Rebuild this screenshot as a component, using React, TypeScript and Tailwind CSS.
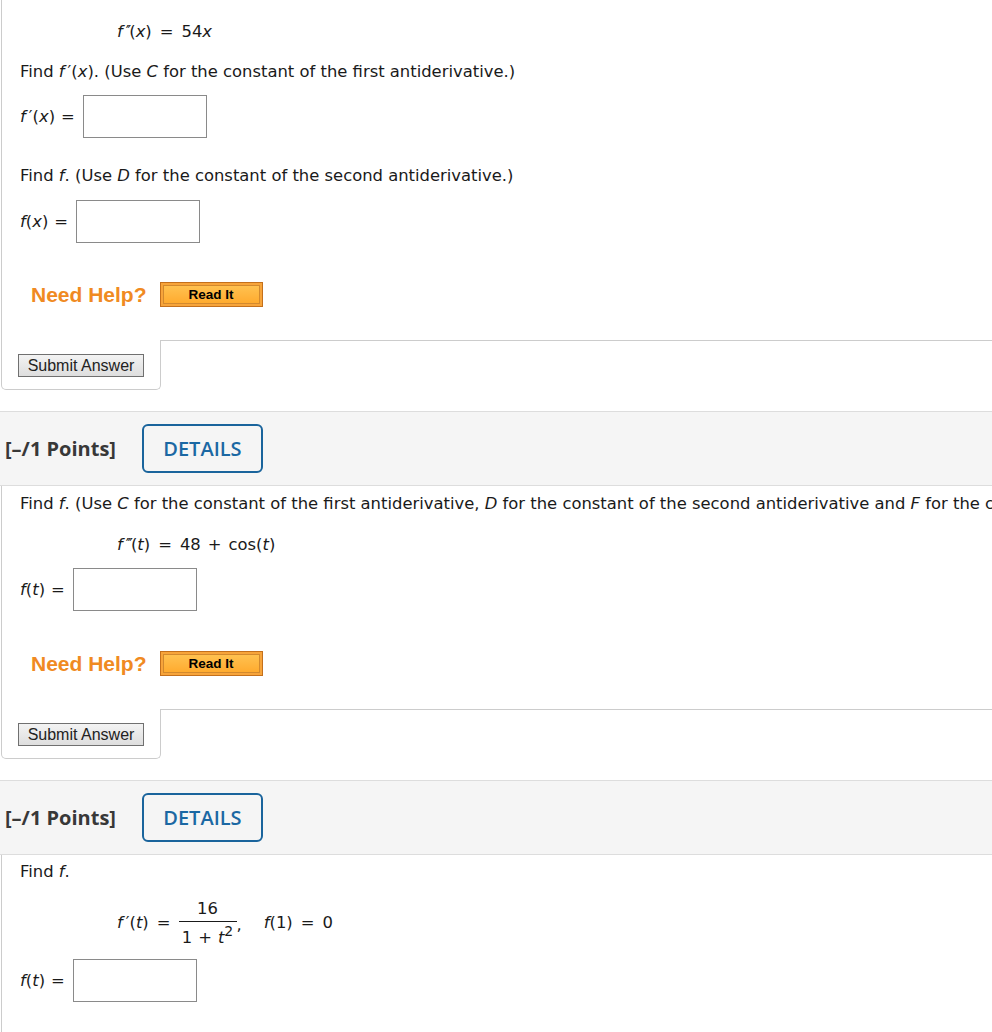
import React from "react";

const body = { fontFamily: '"DejaVu Sans", Verdana, sans-serif' };
const arial = { fontFamily: '"Liberation Sans", Arial, sans-serif' };
const open = { fontFamily: '"Open Sans", "Noto Sans", sans-serif' };

function Box() {
  return <span className="inline-block w-[124px] h-[43px] border border-[#8a8a8a] bg-white" />;
}

function AnswerRow({ label }: { label: React.ReactNode }) {
  return (
    <div className="flex items-center h-[43px] gap-[8px]">
      <span className="leading-[20px]">{label}</span>
      <Box />
    </div>
  );
}

function NeedHelp({ mt }: { mt: string }) {
  return (
    <div className={`flex items-center h-[25px] pl-[11px] ${mt}`} style={arial}>
      <span className="text-[21px] font-bold text-[#f08a22] leading-[25px]">Need Help?</span>
      <span className="ml-[13px] w-[103px] h-[25px] border border-[#c4701c] bg-[#f7a43a] p-[2px] flex">
        <span className="flex-1 border border-[#d2892e] bg-gradient-to-b from-[#ffc14f] to-[#ffab2e] flex items-center justify-center text-[13.5px] font-bold text-black leading-none">
          Read It
        </span>
      </span>
    </div>
  );
}

function SubmitRow() {
  return (
    <div className="flex h-[50px]">
      <div className="w-[160px] ml-px border-l border-b border-r border-[#cccccc] rounded-b-[5px] pl-[16px] pt-[14px]">
        <button
          className="h-[23px] w-[126px] border border-[#707070] bg-gradient-to-b from-[#f3f3f3] to-[#dedede] text-[16px] text-[#222] leading-none flex items-center justify-center"
          style={arial}
        >
          Submit Answer
        </button>
      </div>
      <div className="flex-1 border-t border-[#cccccc]" />
    </div>
  );
}

function Header() {
  return (
    <div className="mt-[21px] h-[75px] bg-[#f5f5f5] border-y border-[#dddddd] flex items-center pl-[5px]" style={open}>
      <span className="text-[20px] font-bold text-[#383838]">[–/1 Points]</span>
      <span className="ml-[26px] w-[121px] h-[49px] border-2 border-[#1a649c] rounded-[6px] flex items-center justify-center text-[20px] font-semibold text-[#1b68a3]">
        DETAILS
      </span>
    </div>
  );
}

const I = ({ children }: { children: React.ReactNode }) => <i>{children}</i>;
const P1 = () => <span className="ml-[3px]">′</span>;
const P2 = () => <span className="ml-[3px] tracking-[-2px]">′′</span>;
const P3 = () => <span className="ml-[3px] tracking-[-2px]">′′′</span>;

export default function App() {
  return (
    <div className="w-[992px] h-[1032px] overflow-hidden bg-white text-[16.4px] text-[#1a1a1a]" style={body}>
      {/* Question 1 (continued) */}
      <div className="ml-px border-l border-[#cccccc] pl-[18px] pt-[22px] pb-[33px]">
        <div className="leading-[20px] pl-[97px]">
          <I>f</I><P2 />(<I>x</I>)<span className="mx-[8px]">=</span>54<I>x</I>
        </div>
        <div className="leading-[20px] mt-[20px]">
          Find <I>f</I><P1 />(<I>x</I>). (Use <I>C</I> for the constant of the first antiderivative.)
        </div>
        <div className="mt-[13px]">
          <AnswerRow label={<><I>f</I><P1 />(<I>x</I>)<span className="ml-[6px]">=</span></>} />
        </div>
        <div className="leading-[20px] mt-[28px]">
          Find <I>f</I>. (Use <I>D</I> for the constant of the second antiderivative.)
        </div>
        <div className="mt-[14px]">
          <AnswerRow label={<><I>f</I>(<I>x</I>)<span className="ml-[6px]">=</span></>} />
        </div>
        <NeedHelp mt="mt-[39px]" />
      </div>
      <SubmitRow />

      <Header />

      {/* Question 2 */}
      <div className="ml-px border-l border-[#cccccc] pl-[18px] pt-[8px] pb-[33px]">
        <div className="leading-[20px] whitespace-nowrap">
          Find <I>f</I>. (Use <I>C</I> for the constant of the first antiderivative, <I>D</I> for the constant of the second antiderivative and <I>F</I> for the constant of the third antiderivative.)
        </div>
        <div className="leading-[20px] mt-[21px] pl-[97px]">
          <I>f</I><P3 />(<I>t</I>)<span className="mx-[8px]">=</span>48<span className="mx-[7px]">+</span>cos(<I>t</I>)
        </div>
        <div className="mt-[13px]">
          <AnswerRow label={<><I>f</I>(<I>t</I>)<span className="ml-[6px]">=</span></>} />
        </div>
        <NeedHelp mt="mt-[40px]" />
      </div>
      <SubmitRow />

      <Header />

      {/* Question 3 */}
      <div className="ml-px border-l border-[#cccccc] pl-[18px] pt-[7px] h-[200px]">
        <div className="leading-[20px]">
          Find <I>f</I>.
        </div>
        <div className="mt-[15px] pl-[97px] flex items-center h-[52px]">
          <span className="leading-[20px]">
            <I>f</I><P1 />(<I>t</I>)<span className="ml-[8px]">=</span>
          </span>
          <span className="ml-[5px] inline-flex flex-col items-center px-[3px]">
            <span className="leading-[20px]">16</span>
            <span className="w-[58px] mt-[2px] border-t border-[#1a1a1a]" />
            <span className="leading-[20px] mt-[6px]">
              1<span className="mx-[6px]">+</span>
              <I>t</I>
              <sup className="text-[14px]">2</sup>
            </span>
          </span>
          <span className="leading-[20px] -ml-[3px] mt-[4px]">,</span>
          <span className="leading-[20px] ml-[22px]">
            <I>f</I>(1)<span className="mx-[8px]">=</span>0
          </span>
        </div>
        <div className="mt-[10px]">
          <AnswerRow label={<><I>f</I>(<I>t</I>)<span className="ml-[6px]">=</span></>} />
        </div>
      </div>
    </div>
  );
}
